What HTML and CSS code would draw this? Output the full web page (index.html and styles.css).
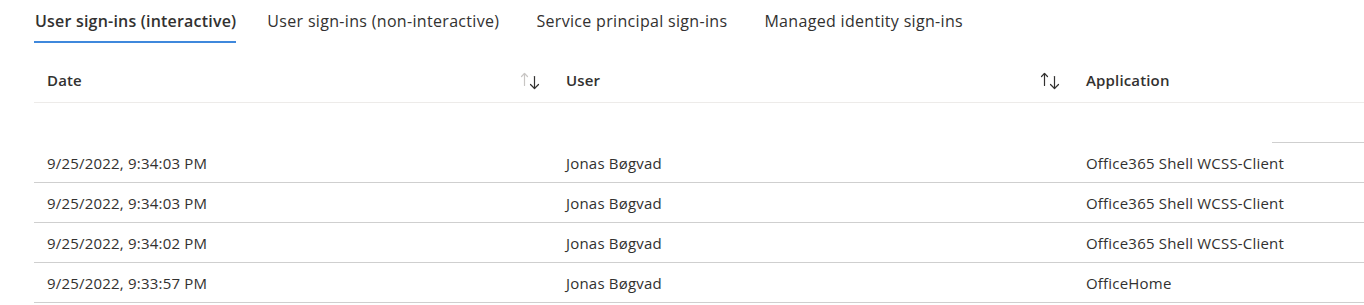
FILE: index.html
```html
<!DOCTYPE html>
<html lang="en">
<head>
<meta charset="utf-8">
<title>Sign-in logs</title>
<link rel="stylesheet" href="styles.css">
</head>
<body>
<div class="page">
  <nav class="tabs">
    <div class="tab active">User sign-ins (interactive)</div>
    <div class="tab">User sign-ins (non-interactive)</div>
    <div class="tab">Service principal sign-ins</div>
    <div class="tab">Managed identity sign-ins</div>
  </nav>
  <div class="grid">
    <div class="row head">
      <div class="cell">
        <span>Date</span>
        <svg class="sort" width="22" height="18" viewBox="0 0 22 18">
          <g fill="none" stroke-width="1.2" stroke-linecap="round" stroke-linejoin="round">
            <g stroke="#c8c6c4"><path d="M4.5 1.5V13.5"/><path d="M1.5 4.5L4.5 1.5L7.5 4.5"/></g>
            <g stroke="#323130"><path d="M14.5 4.5V16.5"/><path d="M10.5 12.5L14.5 16.5L18.5 12.5"/></g>
          </g>
        </svg>
      </div>
      <div class="cell">
        <span>User</span>
        <svg class="sort" width="22" height="18" viewBox="0 0 22 18">
          <g fill="none" stroke="#323130" stroke-width="1.2" stroke-linecap="round" stroke-linejoin="round">
            <path d="M4.5 1.5V13.5"/><path d="M1.5 4.5L4.5 1.5L7.5 4.5"/>
            <path d="M14.5 4.5V16.5"/><path d="M10.5 12.5L14.5 16.5L18.5 12.5"/>
          </g>
        </svg>
      </div>
      <div class="cell"><span>Application</span></div>
    </div>
    <div class="spacer"><div class="stub"></div></div>
    <div class="row">
      <div class="cell">9/25/2022, 9:34:03 PM</div>
      <div class="cell">Jonas Bøgvad</div>
      <div class="cell">Office365 Shell WCSS-Client</div>
    </div>
    <div class="row">
      <div class="cell">9/25/2022, 9:34:03 PM</div>
      <div class="cell">Jonas Bøgvad</div>
      <div class="cell">Office365 Shell WCSS-Client</div>
    </div>
    <div class="row">
      <div class="cell">9/25/2022, 9:34:02 PM</div>
      <div class="cell">Jonas Bøgvad</div>
      <div class="cell">Office365 Shell WCSS-Client</div>
    </div>
    <div class="row">
      <div class="cell">9/25/2022, 9:33:57 PM</div>
      <div class="cell">Jonas Bøgvad</div>
      <div class="cell">OfficeHome</div>
    </div>
  </div>
</div>
</body>
</html>
```
FILE: styles.css
```css
* { box-sizing: border-box; }
html, body { margin: 0; padding: 0; background: #ffffff; }
body {
  font-family: "Open Sans", "Noto Sans", Arial, sans-serif;
  color: #323130;
  overflow: hidden;
}
.page {
  padding-left: 34px;
  width: 1364px;
}
.tabs {
  display: flex;
  height: 44px;
  gap: 36px;
}
.tab {
  font-size: 16px;
  letter-spacing: 0.32px;
  height: 43px;
  padding-top: 9px;
  line-height: 24px;
  white-space: nowrap;
  border-bottom: 2px solid transparent;
  padding-left: 1px;
}
.tab.active {
  font-weight: 600;
  letter-spacing: 0.2px;
  margin-right: -6px;
  border-bottom-color: #3f88dc;
}
.grid {
  margin-top: 14px;
}
.row {
  display: grid;
  grid-template-columns: 520px 520px 1fr;
  height: 40px;
  border-bottom: 1px solid #cfcfcf;
  font-size: 15px;
  letter-spacing: 0.2px;
}
.row.head {
  height: 45px;
  border-bottom-color: #edebe9;
  font-weight: 600;
  letter-spacing: 0.15px;
}
.row.head .cell { padding-bottom: 1px; }
.cell {
  display: flex;
  align-items: center;
  justify-content: space-between;
  padding: 0 12px 0 13px;
  white-space: nowrap;
}
.cell + .cell { padding-left: 12px; }
.sort { display: block; margin-top: 3px; }
.spacer {
  height: 40px;
  display: flex;
  justify-content: flex-end;
  align-items: flex-end;
}
.stub {
  width: 92px;
  height: 1px;
  background: #cfcfcf;
}
```
